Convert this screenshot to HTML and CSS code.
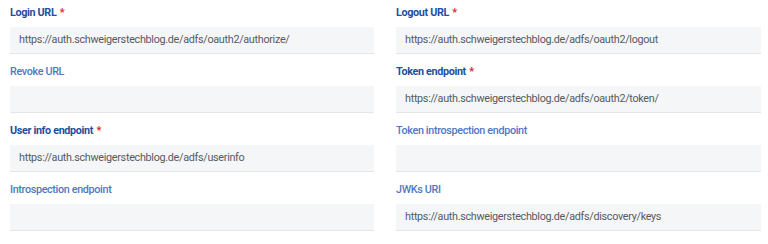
FILE: index.html
```html
<!DOCTYPE html>
<html>
<head>
<meta charset="utf-8">
<link rel="stylesheet" href="styles.css">
</head>
<body>
<div class="form">
  <div class="field">
    <div class="label required">Login URL <span class="star">*</span></div>
    <div class="input">https://auth.schweigerstechblog.de/adfs/oauth2/authorize/</div>
  </div>
  <div class="field">
    <div class="label required">Logout URL <span class="star">*</span></div>
    <div class="input">https://auth.schweigerstechblog.de/adfs/oauth2/logout</div>
  </div>
  <div class="field">
    <div class="label">Revoke URL</div>
    <div class="input"></div>
  </div>
  <div class="field">
    <div class="label required">Token endpoint <span class="star">*</span></div>
    <div class="input">https://auth.schweigerstechblog.de/adfs/oauth2/token/</div>
  </div>
  <div class="field">
    <div class="label required">User info endpoint <span class="star">*</span></div>
    <div class="input">https://auth.schweigerstechblog.de/adfs/userinfo</div>
  </div>
  <div class="field">
    <div class="label">Token introspection endpoint</div>
    <div class="input"></div>
  </div>
  <div class="field">
    <div class="label">Introspection endpoint</div>
    <div class="input"></div>
  </div>
  <div class="field">
    <div class="label">JWKs URI</div>
    <div class="input">https://auth.schweigerstechblog.de/adfs/discovery/keys</div>
  </div>
</div>
</body>
</html>
```
FILE: styles.css
```css
html, body {
  margin: 0;
  padding: 0;
  background: #ffffff;
}
body {
  font-family: Roboto, "Liberation Sans", sans-serif;
}
.form {
  display: grid;
  grid-template-columns: 364px 365px;
  column-gap: 22px;
  row-gap: 10px;
  padding: 5px 0 0 10px;
}
.field {
  display: flex;
  flex-direction: column;
}
.label {
  font-size: 10.8px;
  letter-spacing: -0.35px;
  line-height: 16px;
  height: 16px;
  color: #4f78c4;
  font-weight: 500;
  margin-bottom: 6px;
}
.label.required {
  color: #1f4f9f;
  font-weight: 700;
}
.star {
  color: #d9262c;
  margin-left: 1px;
}
.input {
  height: 26px;
  line-height: 26px;
  background: #f5f6f8;
  border-bottom: 1px solid #e4e6e9;
  padding-left: 9px;
  font-size: 10.8px;
  letter-spacing: -0.3px;
  color: #555a60;
  white-space: nowrap;
  overflow: hidden;
}
```
